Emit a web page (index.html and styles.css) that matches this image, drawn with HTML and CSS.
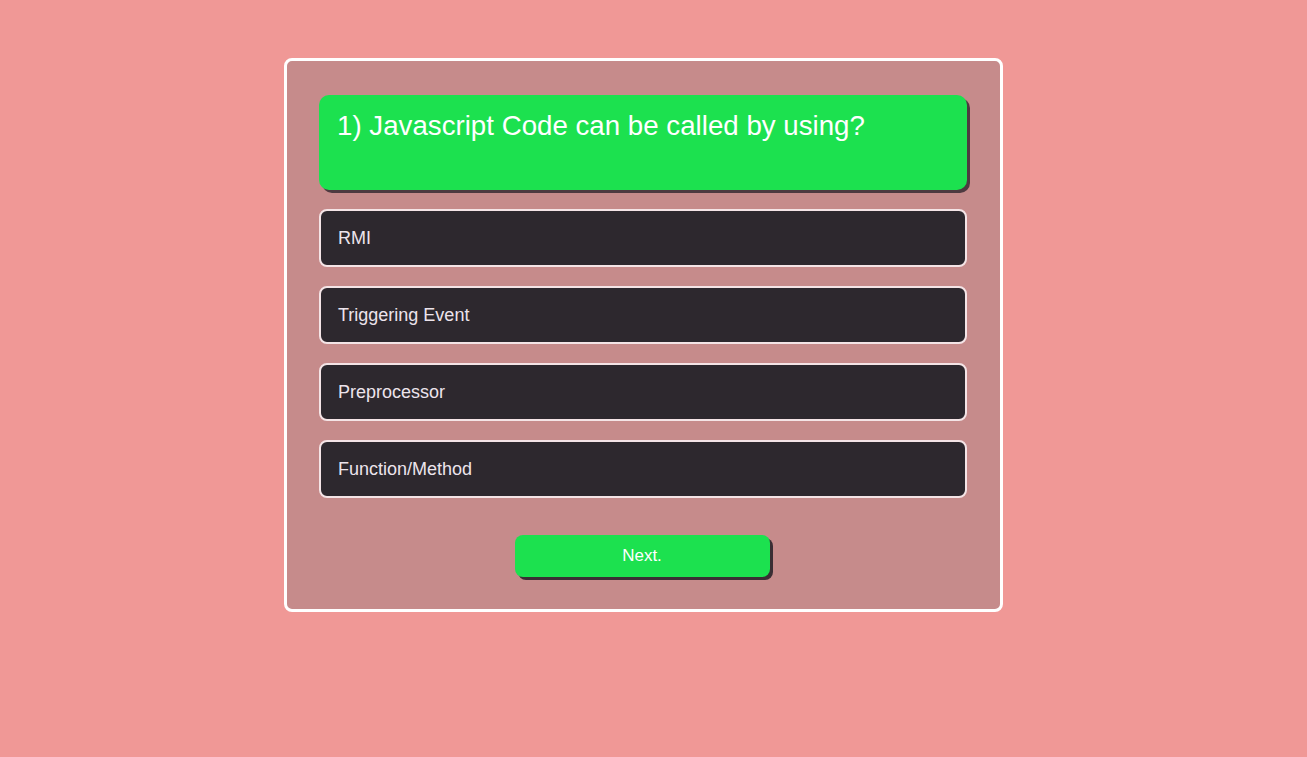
FILE: index.html
```html
<!DOCTYPE html>
<html>
<head>
<meta charset="utf-8">
<link rel="stylesheet" href="styles.css">
</head>
<body>
<div class="card">
  <div class="question">1) Javascript Code can be called by using?</div>
  <div class="options">
    <div class="option">RMI</div>
    <div class="option">Triggering Event</div>
    <div class="option">Preprocessor</div>
    <div class="option">Function/Method</div>
  </div>
  <div class="actions">
    <button class="next">Next.</button>
  </div>
</div>
</body>
</html>
```

FILE: styles.css
```css
html, body {
  margin: 0;
  padding: 0;
  background: #f09896;
  font-family: "Liberation Sans", Arial, sans-serif;
}
body {
  padding-top: 58px;
}
.card {
  box-sizing: border-box;
  width: 719px;
  margin-left: 284px;
  background: #c68b8b;
  border: 3px solid #ffffff;
  border-radius: 8px;
  padding: 34px 33px 32px 32px;
}
.question {
  box-sizing: border-box;
  height: 95px;
  background: #1ce14f;
  border-radius: 10px;
  box-shadow: 3px 3px 0 #4e3a40;
  color: #ffffff;
  font-size: 27.7px;
  padding: 15px 18px;
  width: 648px;
}
.options {
  display: flex;
  flex-direction: column;
  gap: 19px;
  margin-top: 19px;
}
.option {
  box-sizing: border-box;
  height: 58px;
  width: 648px;
  background: #2d282e;
  border: 2px solid #f4e4e6;
  border-radius: 8px;
  color: #ece4ec;
  font-size: 18px;
  display: flex;
  align-items: center;
  padding-left: 17px;
}
.actions {
  display: flex;
  justify-content: center;
  margin-top: 37px;
  padding-right: 3px;
}
.next {
  width: 255px;
  height: 42px;
  background: #1ce14f;
  border: none;
  border-radius: 8px;
  box-shadow: 3px 3px 0 #3a2e34;
  color: #ffffff;
  font-family: "Liberation Sans", Arial, sans-serif;
  font-size: 17px;
  margin-left: 1px;
}
```
